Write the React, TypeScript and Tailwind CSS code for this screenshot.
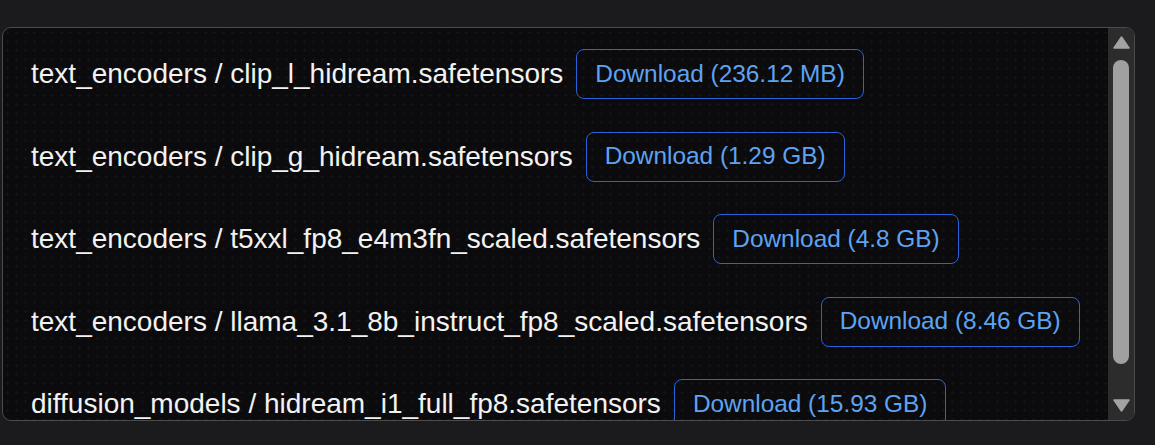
const FILES = [
  { path: 'text_encoders / clip_l_hidream.safetensors', size: '236.12 MB' },
  { path: 'text_encoders / clip_g_hidream.safetensors', size: '1.29 GB' },
  { path: 'text_encoders / t5xxl_fp8_e4m3fn_scaled.safetensors', size: '4.8 GB' },
  { path: 'text_encoders / llama_3.1_8b_instruct_fp8_scaled.safetensors', size: '8.46 GB' },
  { path: 'diffusion_models / hidream_i1_full_fp8.safetensors', size: '15.93 GB' },
]

function Scrollbar() {
  return (
    <div className="w-[26px] shrink-0 bg-[#2c2c2c] flex flex-col items-center pt-[8px] pb-[8px]">
      <svg width="17" height="13" viewBox="0 0 17 13" className="shrink-0">
        <path d="M8.5 1 L16 12 L1 12 Z" fill="#a3a3a3" stroke="#a3a3a3" strokeWidth="1.5" strokeLinejoin="round" />
      </svg>
      <div className="mt-[11px] w-[16px] h-[304px] rounded-full bg-[#a0a0a0]" />
      <div className="flex-1" />
      <svg width="17" height="13" viewBox="0 0 17 13" className="shrink-0">
        <path d="M1 1 L16 1 L8.5 12 Z" fill="#a3a3a3" stroke="#a3a3a3" strokeWidth="1.5" strokeLinejoin="round" />
      </svg>
    </div>
  )
}

export default function App() {
  return (
    <div
      className="w-[1155px] h-[445px] bg-[#1b1b1d] pt-[27px] pl-[2px] overflow-hidden"
      style={{ fontFamily: '"Liberation Sans", Arial, sans-serif' }}
    >
      <div className="w-[1133px] h-[394px] rounded-[9px] border border-[#4b4b4d] overflow-hidden flex bg-[#0b0b0d]">
        {/* file list */}
        <div className="flex-1 overflow-hidden bg-[radial-gradient(circle,#151519_1px,transparent_1.2px)] bg-[length:9px_9px] pl-[28px] pt-[21px]">
          <div className="flex flex-col gap-[32.5px]">
            {FILES.map((f) => (
              <div key={f.path} className="flex items-center gap-[13px]">
                <span className="text-[28px] leading-none text-[#f2f2f2] whitespace-nowrap">
                  {f.path}
                </span>
                <button className="h-[50px] px-[18px] rounded-[8px] border border-[#2a62dc] text-[24.4px] leading-none text-[#5ea3f2] whitespace-nowrap shrink-0">
                  Download ({f.size})
                </button>
              </div>
            ))}
          </div>
        </div>
        <Scrollbar />
      </div>
    </div>
  )
}
